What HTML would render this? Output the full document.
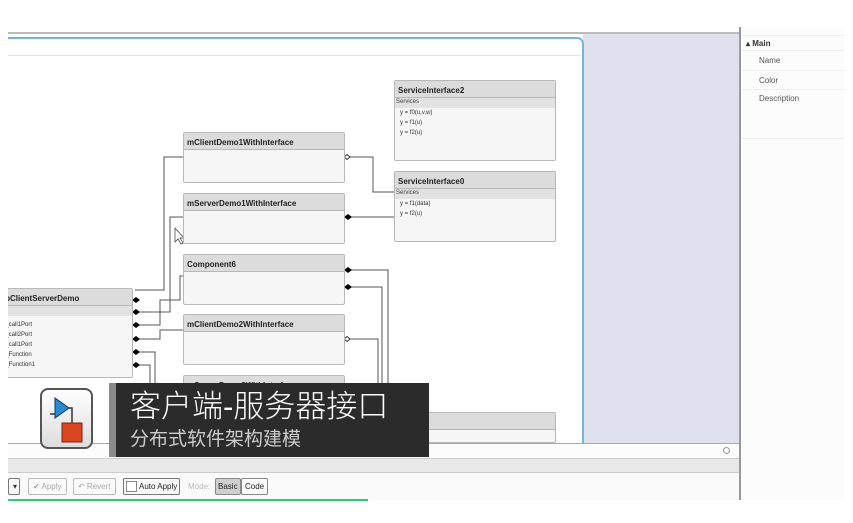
<!DOCTYPE html>
<html><head><meta charset="utf-8"><style>
*{margin:0;padding:0;box-sizing:border-box}
body{width:853px;height:523px;background:#fff;position:relative;overflow:hidden;font-family:"Liberation Sans",sans-serif}
.a{position:absolute}
.box{position:absolute;background:#f6f6f6;border:1px solid #b8b8b8;border-radius:2px}
.box .h{height:17px;background:#dcdcdc;border-bottom:1px solid #b8b8b8;font-size:8px;font-weight:bold;padding:5px 0 0 3px;color:#222;white-space:nowrap}
.sv{height:10px;background:#e2e2e2;font-size:6px;color:#444;padding:1px 0 0 1px}
.it{font-size:6px;color:#333;line-height:10px;padding-left:5px;white-space:nowrap}
.tb{position:absolute;top:478px;height:17px;border:1px solid #bbb;border-radius:2px;font-size:8px;color:#aaa;padding:3px 4px;background:#fafafa;white-space:nowrap}
</style></head><body>
<div class="a" style="left:8px;top:32px;width:731px;height:2px;background:#bbb"></div>
<div class="a" style="left:583px;top:34px;width:156px;height:409px;background:#dfe2ee"></div>
<div class="a" style="left:8px;top:37px;width:576px;height:407px;background:#fff;border:2px solid #6cb8e0;border-left:none;border-bottom:none;border-top-right-radius:7px"></div>
<div class="a" style="left:8px;top:55px;width:573px;height:1px;background:#e4e4e4"></div>
<svg class="a" style="left:0;top:0" width="600" height="443">
<g stroke="#555" stroke-width="1" fill="none">
<path d="M183 157H164V290H135"/><path d="M183 217H170V312H135"/>
<path d="M183 276H180V300H160V325H135"/>
<path d="M344 157H373V192H394"/><path d="M344 217H394"/>
<path d="M344 270H388V443"/><path d="M344 287H382V443"/><path d="M344 339H378V443"/>
<path d="M135 339H160V330H183"/><path d="M135 352H155V443"/><path d="M135 365H150V443"/>
</g>
<g fill="#000"><path d="M344 217l4-3 4 3-4 3z"/><path d="M344 270l4-3 4 3-4 3z"/><path d="M344 287l4-3 4 3-4 3z"/>
<path d="M132 300l4-3 4 3-4 3z"/><path d="M132 312l4-3 4 3-4 3z"/><path d="M132 325l4-3 4 3-4 3z"/><path d="M132 339l4-3 4 3-4 3z"/><path d="M132 352l4-3 4 3-4 3z"/><path d="M132 365l4-3 4 3-4 3z"/></g>
<g fill="#fff" stroke="#333"><path d="M344 157l3-2.5 3 2.5-3 2.5z"/><path d="M344 339l3-2.5 3 2.5-3 2.5z"/></g>
<path d="M175 228v14l3-3 3 5 2-1-3-5h4z" fill="#fff" stroke="#333" stroke-width=".7"/>
</svg>
<div class="box" style="left:394px;top:80px;width:162px;height:81px"><div class="h">ServiceInterface2</div><div class="sv">Services</div><div class="it">y = f0(u,v,w)<br>y = f1(u)<br>y = f2(u)</div></div>
<div class="box" style="left:394px;top:171px;width:162px;height:71px"><div class="h">ServiceInterface0</div><div class="sv">Services</div><div class="it">y = f1(data)<br>y = f2(u)</div></div>
<div class="box" style="left:183px;top:132px;width:162px;height:51px"><div class="h">mClientDemo1WithInterface</div></div>
<div class="box" style="left:183px;top:193px;width:162px;height:51px"><div class="h">mServerDemo1WithInterface</div></div>
<div class="box" style="left:183px;top:254px;width:162px;height:51px"><div class="h">Component6</div></div>
<div class="box" style="left:183px;top:314px;width:162px;height:51px"><div class="h">mClientDemo2WithInterface</div></div>
<div class="box" style="left:183px;top:375px;width:162px;height:68px"><div class="h">mServerDemo2WithInterface</div></div>
<div class="box" style="left:394px;top:412px;width:162px;height:31px"><div class="h"></div></div>
<div class="box" style="left:-8px;top:288px;width:141px;height:90px"><div class="h" style="padding-left:5px">mpClientServerDemo</div><div class="sv" style="margin-bottom:4px"></div><div class="it" style="padding-left:4px">nt1_call1Port<br>nt1_call2Port<br>nt3_call1Port<br>nt5_Function<br>nt5_Function1</div></div>
<div class="a" style="left:0;top:0;width:8px;height:523px;background:#fff"></div>
<div class="a" style="left:8px;top:443px;width:731px;height:15px;background:#fcfcfc;border-top:1px solid #aaa"></div>
<div class="a" style="left:723px;top:447px;width:7px;height:7px;border:1.5px solid #999;border-radius:50%"></div>
<div class="a" style="left:8px;top:458px;width:731px;height:15px;background:#e8e8e8;border-top:1px solid #ccc;border-bottom:1px solid #ccc"></div>
<div class="a" style="left:8px;top:473px;width:731px;height:27px;background:#fafafa"></div>
<div class="tb" style="left:8px;width:12px;color:#333;border-color:#777">▾</div>
<div class="tb" style="left:28px;width:39px">✔ Apply</div>
<div class="tb" style="left:73px;width:43px">↶ Revert</div>
<div class="tb" style="left:123px;width:57px;color:#222;border-color:#777;padding-left:15px">Auto Apply</div>
<div class="a" style="left:126px;top:481px;width:11px;height:11px;border:1px solid #888;background:#fff"></div>
<div class="a" style="left:188px;top:482px;font-size:8px;color:#bbb">Mode:</div>
<div class="tb" style="left:215px;width:26px;background:#cfcfcf;color:#222;border-color:#888;padding:3px 2px">Basic</div>
<div class="tb" style="left:241px;width:27px;color:#222;border-color:#888;padding:3px 3px">Code</div>
<div class="a" style="left:8px;top:499px;width:360px;height:2px;background:#2ecc71"></div>
<div class="a" style="left:739px;top:27px;width:105px;height:473px;background:#fcfcfc;border-left:2px solid #999"></div>
<div class="a" style="left:742px;top:35px;width:102px;height:1px;background:#eee"></div>
<div class="a" style="left:746px;top:39px;font-size:8px;font-weight:bold;color:#333">▴ Main</div>
<div class="a" style="left:742px;top:50px;width:102px;height:1px;background:#eee"></div>
<div class="a" style="left:759px;top:56px;font-size:8px;color:#555">Name</div>
<div class="a" style="left:742px;top:70px;width:102px;height:1px;background:#eee"></div>
<div class="a" style="left:759px;top:76px;font-size:8px;color:#555">Color</div>
<div class="a" style="left:742px;top:89px;width:102px;height:1px;background:#eee"></div>
<div class="a" style="left:759px;top:94px;font-size:8px;color:#555">Description</div>
<div class="a" style="left:742px;top:138px;width:102px;height:1px;background:#eee"></div>
<div class="a" style="left:40px;top:388px;width:53px;height:61px;border:2px solid #555;border-radius:8px;background:linear-gradient(#fff,#ddd)"></div>
<svg class="a" style="left:40px;top:388px" width="53" height="61"><path d="M10 26H16M26 20H32V36" stroke="#333" fill="none" stroke-width="1.5"/><path d="M15 10L29 20 15 30z" fill="#2a8ad0" stroke="#135" stroke-width="1"/><rect x="22" y="35" width="20" height="19" fill="#d9461f" stroke="#722" stroke-width="1"/></svg>
<div class="a" style="left:109px;top:383px;width:320px;height:74px;background:#2b2b2b;border-left:7px solid #8a8a8a"></div>
<div class="a" style="left:130px;top:386px;font-size:31px;color:#fff;font-family:'Liberation Sans','Noto Sans CJK SC',sans-serif;font-weight:300;white-space:nowrap;line-height:42px">客户端-服务器接口</div>
<div class="a" style="left:130px;top:427px;font-size:19px;color:#ccc;font-family:'Liberation Sans','Noto Sans CJK SC',sans-serif;white-space:nowrap;line-height:26px">分布式软件架构建模</div>
</body></html>
